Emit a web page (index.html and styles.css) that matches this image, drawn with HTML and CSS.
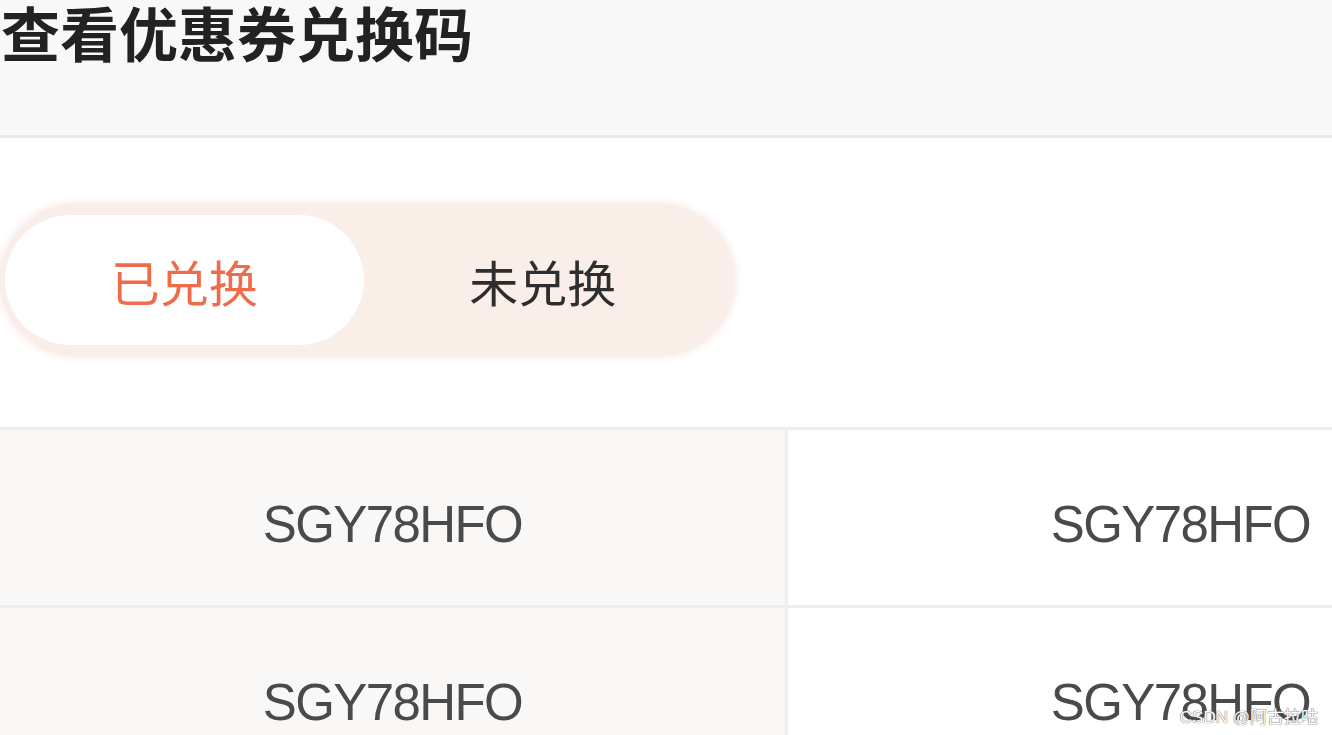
FILE: index.html
```html
<!DOCTYPE html>
<html lang="zh-CN">
<head>
    <meta charset="UTF-8">
    <meta name="viewport" content="width=device-width, initial-scale=1.0">
    <title>查看优惠券兑换码</title>
    <link rel="stylesheet" href="styles.css">
</head>
<body>
    <div class="header">
        <h1 class="title">查看优惠券兑换码</h1>
    </div>

    <div class="tabs">
        <div class="tab active">已兑换</div>
        <div class="tab">未兑换</div>
    </div>

    <div class="codes">
        <div class="code-cell odd">SGY78HFO</div>
        <div class="code-cell">SGY78HFO</div>
        <div class="code-cell odd">SGY78HFO</div>
        <div class="code-cell">SGY78HFO</div>
    </div>

    <div class="watermark">CSDN @阿古拉咕</div>
</body>
</html>
```

FILE: styles.css
```css
body {
    margin: 0;
    font-family: "Liberation Sans", "Noto Sans CJK SC", sans-serif;
    background-color: #fff;
    width: 1332px;
    height: 735px;
    overflow: hidden;
    position: relative;
}

.header {
    height: 135px;
    background-color: #f8f8f8;
    border-bottom: 3px solid #e9e9e9;
}

.title {
    margin: 0;
    padding-left: 1px;
    font-family: "Noto Sans CJK SC", sans-serif;
    font-size: 59px;
    font-weight: bold;
    line-height: 64px;
    color: #222;
}

.tabs {
    display: flex;
    width: 717px;
    height: 130px;
    margin-top: 66px;
    padding: 11px 13px 11px 5px;
    background-color: #f9eee8;
    border-radius: 76px;
    box-shadow: 0 0 6px 2px rgba(245, 225, 214, 0.6);
}

.tab {
    flex: 1;
    display: flex;
    justify-content: center;
    align-items: center;
    font-family: "Noto Sans CJK SC", sans-serif;
    font-size: 49px;
    color: #2e2e2e;
    border-radius: 65px;
}

.tab.active {
    background-color: #fff;
    color: #ef6c4a;
}

.codes {
    display: grid;
    grid-template-columns: 788px 785px;
    margin-top: 71px;
    width: 1573px;
}

.code-cell {
    height: 161px;
    padding-top: 14px;
    display: flex;
    justify-content: center;
    align-items: center;
    border-top: 3px solid #ededed;
    font-size: 51px;
    letter-spacing: -1.6px;
    color: #4a4a4a;
    background-color: #fff;
}

.code-cell.odd {
    background-color: #faf8f6;
    border-right: 3px solid #f0efee;
}

.watermark {
    position: absolute;
    right: 14px;
    bottom: 7px;
    font-size: 17px;
    color: #fff;
    text-shadow: 0 0 1px #666, 0 0 1px #666;
}
```
